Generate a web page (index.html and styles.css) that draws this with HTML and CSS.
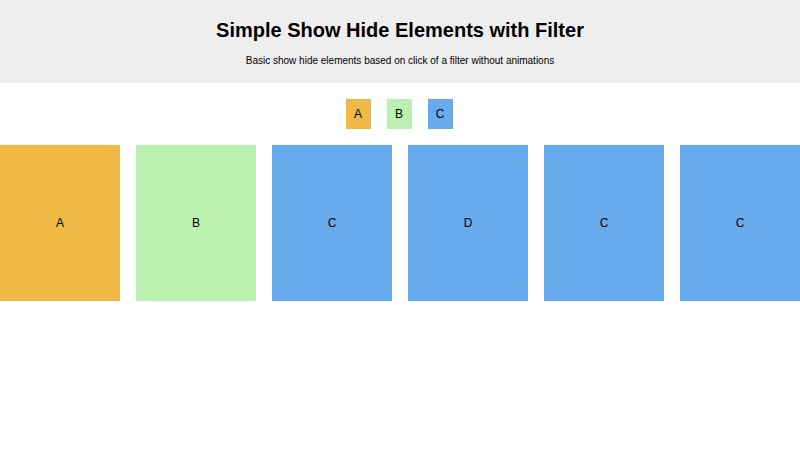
FILE: index.html
```html
<!DOCTYPE html>
<html>
<head>
<meta charset="utf-8">
<link rel="stylesheet" href="styles.css">
</head>
<body>
<header class="header">
  <h1 class="title">Simple Show Hide Elements with Filter</h1>
  <p class="subtitle">Basic show hide elements based on click of a filter without animations</p>
</header>
<div class="filters">
  <button class="filter a">A</button>
  <button class="filter b">B</button>
  <button class="filter c">C</button>
</div>
<div class="boxes">
  <div class="box a">A</div>
  <div class="box b">B</div>
  <div class="box c">C</div>
  <div class="box c">D</div>
  <div class="box c">C</div>
  <div class="box c">C</div>
</div>
</body>
</html>
```
FILE: styles.css
```css
html, body {
  margin: 0;
  padding: 0;
  background: #fff;
  font-family: "Liberation Sans", Arial, sans-serif;
  color: #000;
}
.header {
  background: #eeeeee;
  padding: 18px 0 16px;
  text-align: center;
}
.title {
  margin: 0;
  font-size: 20px;
  line-height: 24px;
  font-weight: bold;
}
.subtitle {
  margin: 13px 0 0;
  font-size: 10px;
  line-height: 12px;
}
.filters {
  display: flex;
  justify-content: center;
  gap: 16px;
  margin-top: 16px;
  padding-right: 2px;
}
.filter {
  width: 25px;
  height: 30px;
  border: none;
  padding: 0;
  margin: 0;
  font-family: "Liberation Sans", Arial, sans-serif;
  font-size: 12px;
  color: #000;
  display: flex;
  align-items: center;
  justify-content: center;
}
.boxes {
  display: flex;
  gap: 16px;
  margin-top: 16px;
}
.box {
  width: 120px;
  height: 156px;
  flex: none;
  display: flex;
  align-items: center;
  justify-content: center;
  font-size: 12px;
}
.a { background: #f0b946; }
.b { background: #bbf0b0; }
.c { background: #68abec; }
```
